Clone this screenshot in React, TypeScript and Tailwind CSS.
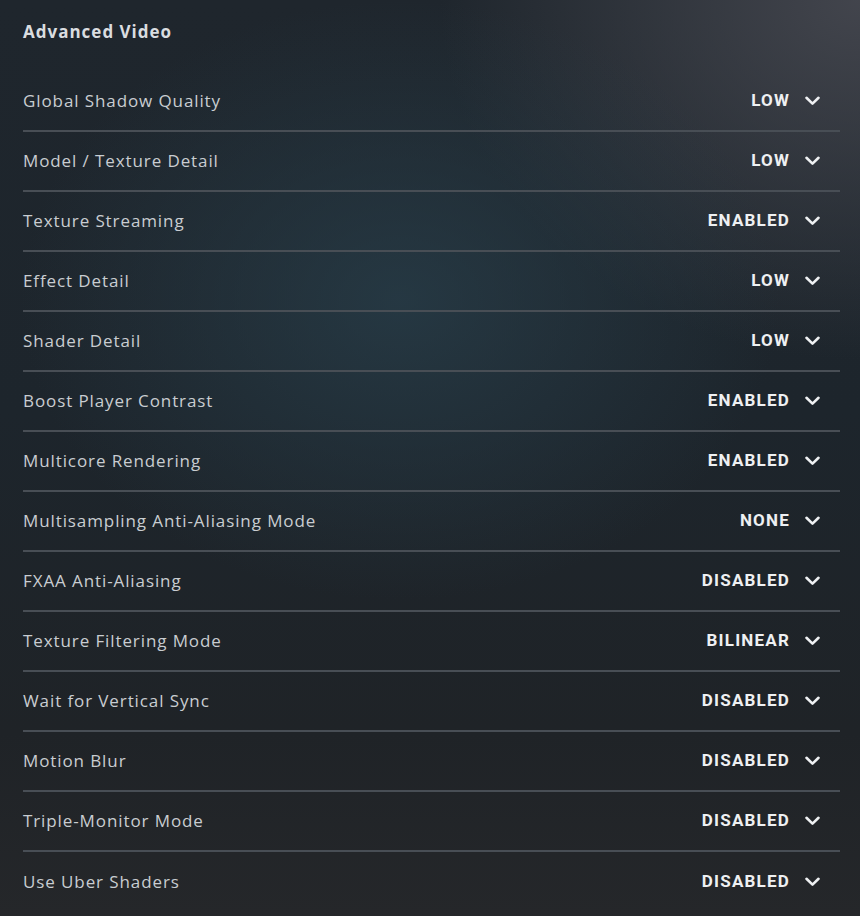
type Setting = { label: string; value: string };

const settings: Setting[] = [
  { label: 'Global Shadow Quality', value: 'LOW' },
  { label: 'Model / Texture Detail', value: 'LOW' },
  { label: 'Texture Streaming', value: 'ENABLED' },
  { label: 'Effect Detail', value: 'LOW' },
  { label: 'Shader Detail', value: 'LOW' },
  { label: 'Boost Player Contrast', value: 'ENABLED' },
  { label: 'Multicore Rendering', value: 'ENABLED' },
  { label: 'Multisampling Anti-Aliasing Mode', value: 'NONE' },
  { label: 'FXAA Anti-Aliasing', value: 'DISABLED' },
  { label: 'Texture Filtering Mode', value: 'BILINEAR' },
  { label: 'Wait for Vertical Sync', value: 'DISABLED' },
  { label: 'Motion Blur', value: 'DISABLED' },
  { label: 'Triple-Monitor Mode', value: 'DISABLED' },
  { label: 'Use Uber Shaders', value: 'DISABLED' },
];

// small dropdown caret next to each value
const Caret = () => (
  <svg width="15" height="10" viewBox="0 0 15 10" className="text-[#eef0f2]">
    <polyline
      points="1.5,1.8 7.5,7.6 13.5,1.8"
      fill="none"
      stroke="currentColor"
      strokeWidth="2.6"
      strokeLinecap="round"
      strokeLinejoin="round"
    />
  </svg>
);

const SettingRow = ({ label, value, last }: Setting & { last: boolean }) => (
  <div
    className={`flex h-[60px] items-center justify-between pr-[20px] ${
      last ? '' : 'border-b-2 border-[#484e55]'
    }`}
  >
    <span className="text-[17px] tracking-[0.9px] text-[#c9cdd1] font-['Open_Sans',sans-serif]">
      {label}
    </span>
    <div className="flex items-center gap-[15px]">
      <span className="text-[17px] font-bold tracking-[1.2px] text-[#eef0f2] font-['Roboto',sans-serif]">
        {value}
      </span>
      <Caret />
    </div>
  </div>
);

export default function App() {
  return (
    <div className="min-h-[916px] w-full bg-[#1d232a] bg-[radial-gradient(ellipse_380px_300px_at_400px_300px,rgba(40,62,74,0.75),transparent),radial-gradient(ellipse_420px_360px_at_860px_0px,rgba(70,72,80,0.9),transparent),linear-gradient(180deg,#1f262d_0%,#1d252c_45%,#1f2327_80%,#25272a_100%)] pl-[23px] pt-[19px]">
      <h1 className="text-[17px] font-bold tracking-[1px] text-[#dadde0] font-['Open_Sans',sans-serif]">
        Advanced Video
      </h1>
      <div className="mt-[27px] w-[817px]">
        {settings.map((s, i) => (
          <SettingRow key={s.label} {...s} last={i === settings.length - 1} />
        ))}
      </div>
    </div>
  );
}
